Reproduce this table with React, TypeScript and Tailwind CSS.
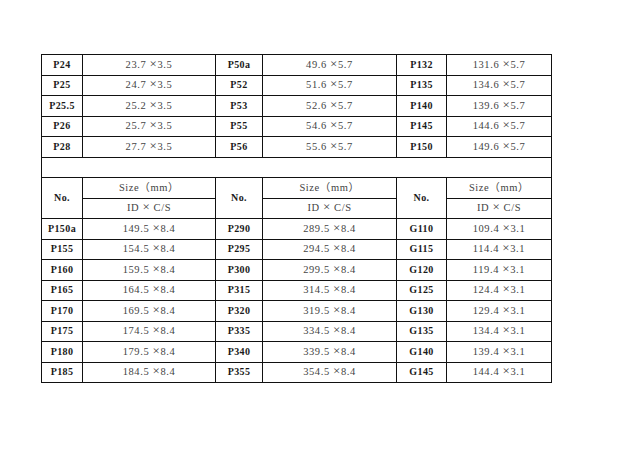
import React from "react";

const top: [string, string, string, string, string, string][] = [
  ["P24", "23.7", "P50a", "49.6", "P132", "131.6"],
  ["P25", "24.7", "P52", "51.6", "P135", "134.6"],
  ["P25.5", "25.2", "P53", "52.6", "P140", "139.6"],
  ["P26", "25.7", "P55", "54.6", "P145", "144.6"],
  ["P28", "27.7", "P56", "55.6", "P150", "149.6"],
];
const topCs = ["3.5", "5.7", "5.7"];

const bottom: [string, string, string, string, string, string][] = [
  ["P150a", "149.5", "P290", "289.5", "G110", "109.4"],
  ["P155", "154.5", "P295", "294.5", "G115", "114.4"],
  ["P160", "159.5", "P300", "299.5", "G120", "119.4"],
  ["P165", "164.5", "P315", "314.5", "G125", "124.4"],
  ["P170", "169.5", "P320", "319.5", "G130", "129.4"],
  ["P175", "174.5", "P335", "334.5", "G135", "134.4"],
  ["P180", "179.5", "P340", "339.5", "G140", "139.4"],
  ["P185", "184.5", "P355", "354.5", "G145", "144.4"],
];
const bottomCs = ["8.4", "8.4", "3.1"];

const cell = "h-[20.5px] border border-[#111] p-0 text-center align-middle";
const no = `${cell} text-[10px] font-bold tracking-[0.4px] text-[#1a1a1a]`;
const size = `${cell} text-[10.5px] tracking-[0.6px] text-[#444]`;

function Times() {
  return <span className="text-[13px] leading-[0]">×</span>;
}

function Dim({ id, cs }: { id: string; cs: string }) {
  return (
    <>
      {id} <Times />
      {cs}
    </>
  );
}

function DataRow({ r, cs }: { r: string[]; cs: string[] }) {
  return (
    <tr>
      <td className={no}>{r[0]}</td>
      <td className={size}>
        <Dim id={r[1]} cs={cs[0]} />
      </td>
      <td className={no}>{r[2]}</td>
      <td className={size}>
        <Dim id={r[3]} cs={cs[1]} />
      </td>
      <td className={no}>{r[4]}</td>
      <td className={size}>
        <Dim id={r[5]} cs={cs[2]} />
      </td>
    </tr>
  );
}

export default function App() {
  return (
    <div className="h-[451px] w-[638px] bg-white pl-[41px] pt-[54px] font-['Liberation_Serif','Noto_Sans_CJK_SC',serif] leading-none">
      <table className="w-[510px] table-fixed border-collapse">
        <colgroup>
          <col className="w-[41px]" />
          <col className="w-[133px]" />
          <col className="w-[47px]" />
          <col className="w-[134px]" />
          <col className="w-[50px]" />
          <col className="w-[105px]" />
        </colgroup>
        <tbody>
          {top.map((r) => (
            <DataRow key={r[0]} r={r} cs={topCs} />
          ))}
          <tr>
            <td colSpan={6} className={cell}></td>
          </tr>
          <tr>
            <td rowSpan={2} className={no}>No.</td>
            <td className={size}>Size（mm）</td>
            <td rowSpan={2} className={no}>No.</td>
            <td className={size}>Size（mm）</td>
            <td rowSpan={2} className={no}>No.</td>
            <td className={size}>Size（mm）</td>
          </tr>
          <tr>
            <td className={size}>
              ID <Times /> C/S
            </td>
            <td className={size}>
              ID <Times /> C/S
            </td>
            <td className={size}>
              ID <Times /> C/S
            </td>
          </tr>
          {bottom.map((r) => (
            <DataRow key={r[0]} r={r} cs={bottomCs} />
          ))}
        </tbody>
      </table>
    </div>
  );
}
